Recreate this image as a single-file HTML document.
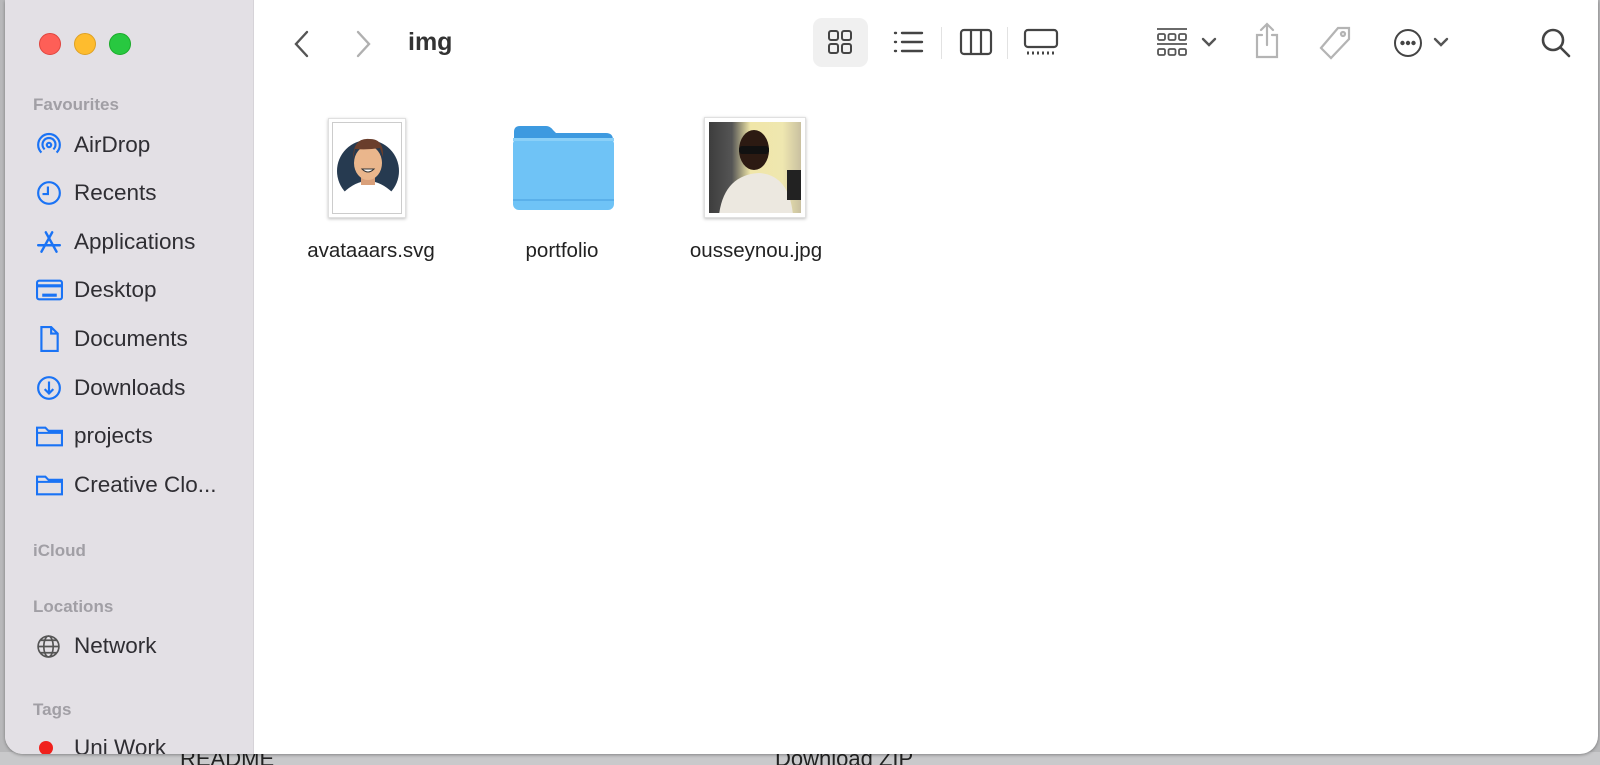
<!DOCTYPE html>
<html><head><meta charset="utf-8"><style>
*{margin:0;padding:0;box-sizing:border-box}
body{width:1600px;height:765px;overflow:hidden;background:#b8b8ba;font-family:"Liberation Sans",sans-serif;position:relative}
.bot{position:absolute;left:0;top:752px;width:1600px;height:13px;background:#c9c9cb;overflow:hidden}
.bot span{position:absolute;top:-6px;font-size:22px;color:#222}
.win{position:absolute;left:5px;top:0;width:1593px;height:754px;background:#fff;border-radius:0 0 18px 18px;overflow:hidden;box-shadow:0 1px 3px rgba(0,0,0,.35)}
.side{position:absolute;left:0;top:0;width:249px;height:100%;background:#e3e0e5;border-right:1px solid #d6d3d8}
.tl{position:absolute;top:33px;width:22px;height:22px;border-radius:50%}
.hd{position:absolute;left:28px;font-size:17px;font-weight:bold;color:#a19fa5}
.it{position:absolute;left:69px;font-size:22.5px;color:#2f2e33;line-height:24px}
.ic{position:absolute;left:31px}
.lbl{position:absolute;font-size:20.5px;color:#222;transform:translateX(-50%);white-space:nowrap}
</style></head><body>
<div class="bot"><span style="left:180px">README</span><span style="left:775px">Download ZIP</span></div>
<div class="win">
<div class="side">
<div class="tl" style="left:34px;background:#fe5f57;border:1px solid #e0443e"></div>
<div class="tl" style="left:69px;background:#febc2e;border:1px solid #dea123"></div>
<div class="tl" style="left:104px;background:#28c840;border:1px solid #1aab29"></div>
<div class="hd" style="top:95px">Favourites</div>
<svg class="ic" style="top:132px" width="26" height="26" viewBox="0 0 24 24" fill="none" stroke="#1a73f5" stroke-width="2"><circle cx="12" cy="12" r="2"/><path d="M8 16a6 6 0 1 1 8 0M5 19a10 10 0 1 1 14 0"/></svg>
<div class="it" style="top:133px">AirDrop</div>
<svg class="ic" style="top:180px" width="26" height="26" viewBox="0 0 24 24" fill="none" stroke="#1a73f5" stroke-width="2"><circle cx="12" cy="12" r="10"/><path d="M11 6v7h-5"/></svg>
<div class="it" style="top:181px">Recents</div>
<svg class="ic" style="top:229px" width="26" height="26" viewBox="0 0 24 24" fill="none" stroke="#1a73f5" stroke-width="2.2" stroke-linecap="round"><path d="M9 3l10 18M15 3L5 21M2 15h20"/></svg>
<div class="it" style="top:230px">Applications</div>
<svg class="ic" style="top:277px" width="27" height="26" viewBox="0 0 26 24" fill="none" stroke="#1a73f5" stroke-width="2"><rect x="1" y="3" width="24" height="18" rx="2"/><path d="M1 8h24M6 17h14" stroke-width="3"/></svg>
<div class="it" style="top:278px">Desktop</div>
<svg class="ic" style="top:326px" width="26" height="26" viewBox="0 0 24 24" fill="none" stroke="#1a73f5" stroke-width="2"><path d="M5 1h9l6 6v16H5zM14 1v6h6"/></svg>
<div class="it" style="top:327px">Documents</div>
<svg class="ic" style="top:375px" width="26" height="26" viewBox="0 0 24 24" fill="none" stroke="#1a73f5" stroke-width="2"><circle cx="12" cy="12" r="10"/><path d="M12 6v11M8 13l4 4 4-4"/></svg>
<div class="it" style="top:376px">Downloads</div>
<svg class="ic" style="top:423px" width="27" height="26" viewBox="0 0 26 24" fill="none" stroke="#1a73f5" stroke-width="2"><path d="M1 4h8l3 3h13v14H1zM1 9h24"/></svg>
<div class="it" style="top:424px">projects</div>
<svg class="ic" style="top:472px" width="27" height="26" viewBox="0 0 26 24" fill="none" stroke="#1a73f5" stroke-width="2"><path d="M1 4h8l3 3h13v14H1zM1 9h24"/></svg>
<div class="it" style="top:473px">Creative Clo...</div>
<div class="hd" style="top:541px">iCloud</div>
<div class="hd" style="top:597px">Locations</div>
<svg class="ic" style="top:634px" width="25" height="25" viewBox="0 0 24 24" fill="none" stroke="#555" stroke-width="1.6"><circle cx="12" cy="12" r="10"/><ellipse cx="12" cy="12" rx="4.5" ry="10"/><path d="M2 12h20M4 6h16M4 18h16"/></svg>
<div class="it" style="top:634px">Network</div>
<div class="hd" style="top:700px">Tags</div>
<div style="position:absolute;left:34px;top:741px;width:14px;height:14px;border-radius:50%;background:#f0201c"></div>
<div class="it" style="top:736px">Uni Work</div>
</div>
<svg style="position:absolute;left:287px;top:30px" width="20" height="28" viewBox="0 0 20 28" fill="none" stroke="#555" stroke-width="2.4" stroke-linecap="round"><path d="M15 2L4 14l11 12"/></svg>
<svg style="position:absolute;left:348px;top:30px" width="20" height="28" viewBox="0 0 20 28" fill="none" stroke="#b0b0b0" stroke-width="2.4" stroke-linecap="round"><path d="M5 2l11 12L5 26"/></svg>
<div style="position:absolute;left:403px;top:28px;font-size:25px;font-weight:bold;color:#333">img</div>
<div style="position:absolute;left:808px;top:18px;width:55px;height:49px;border-radius:9px;background:#f0f0f0"></div>
<svg style="position:absolute;left:822px;top:29px" width="26" height="26" viewBox="0 0 26 26" fill="none" stroke="#444" stroke-width="2"><rect x="2" y="2" width="9" height="9" rx="2"/><rect x="15" y="2" width="9" height="9" rx="2"/><rect x="2" y="15" width="9" height="9" rx="2"/><rect x="15" y="15" width="9" height="9" rx="2"/></svg>
<svg style="position:absolute;left:887px;top:30px" width="32" height="24" viewBox="0 0 32 24" fill="none" stroke="#444" stroke-width="2.4" stroke-linecap="round"><path d="M3 3h1M3 12h1M3 21h1M10 3h20M10 12h20M10 21h20"/></svg>
<div style="position:absolute;left:936px;top:27px;width:1px;height:32px;background:#e2e2e2"></div>
<svg style="position:absolute;left:954px;top:28px" width="34" height="28" viewBox="0 0 34 28" fill="none" stroke="#444" stroke-width="2.2"><rect x="2" y="2" width="30" height="24" rx="3"/><path d="M12 2v24M22 2v24"/></svg>
<div style="position:absolute;left:1002px;top:27px;width:1px;height:32px;background:#e2e2e2"></div>
<svg style="position:absolute;left:1018px;top:28px" width="36" height="28" viewBox="0 0 36 28" fill="none" stroke="#444" stroke-width="2.2"><rect x="2" y="2" width="32" height="17" rx="3"/><path d="M4 25h2M9 25h2M14 25h2M19 25h2M24 25h2M29 25h2" stroke-width="3"/></svg>
<svg style="position:absolute;left:1150px;top:27px" width="34" height="32" viewBox="0 0 34 32" fill="none" stroke="#555" stroke-width="1.8"><path d="M2 2h30M2 17h30"/><rect x="3" y="7" width="7" height="6" rx="1.5"/><rect x="13.5" y="7" width="7" height="6" rx="1.5"/><rect x="24" y="7" width="7" height="6" rx="1.5"/><rect x="3" y="22" width="7" height="6" rx="1.5"/><rect x="13.5" y="22" width="7" height="6" rx="1.5"/><rect x="24" y="22" width="7" height="6" rx="1.5"/></svg>
<svg style="position:absolute;left:1196px;top:36px" width="16" height="12" viewBox="0 0 16 12" fill="none" stroke="#555" stroke-width="2.4" stroke-linecap="round"><path d="M2 3l6 6 6-6"/></svg>
<svg style="position:absolute;left:1248px;top:22px" width="28" height="38" viewBox="0 0 28 38" fill="none" stroke="#b4b4b4" stroke-width="2.2" stroke-linecap="round"><path d="M9 13H4v22h20V13h-5M14 2v21M8 8l6-6 6 6"/></svg>
<svg style="position:absolute;left:1313px;top:25px" width="36" height="36" viewBox="0 0 36 36" fill="none" stroke="#b4b4b4" stroke-width="2.2"><path d="M20 3h11v11L13 33 3 23z"/><circle cx="25" cy="9" r="2"/></svg>
<svg style="position:absolute;left:1388px;top:28px" width="30" height="30" viewBox="0 0 30 30" fill="none" stroke="#444" stroke-width="2"><circle cx="15" cy="15" r="13"/><circle cx="9.5" cy="15" r="1.2" fill="#444"/><circle cx="15" cy="15" r="1.2" fill="#444"/><circle cx="20.5" cy="15" r="1.2" fill="#444"/></svg>
<svg style="position:absolute;left:1428px;top:36px" width="16" height="12" viewBox="0 0 16 12" fill="none" stroke="#555" stroke-width="2.4" stroke-linecap="round"><path d="M2 3l6 6 6-6"/></svg>
<svg style="position:absolute;left:1535px;top:27px" width="32" height="32" viewBox="0 0 32 32" fill="none" stroke="#444" stroke-width="2.6" stroke-linecap="round"><circle cx="13" cy="13" r="10"/><path d="M20.5 20.5L29 29"/></svg>
<div style="position:absolute;left:323px;top:118px;width:78px;height:100px;background:#fff;border:1px solid #e0e0e0;box-shadow:0 1px 3px rgba(0,0,0,.25)">
<div style="position:absolute;left:3px;top:3px;right:3px;bottom:3px;border:1px solid #ccc;overflow:hidden">
<svg width="70" height="92" viewBox="0 0 70 92"><circle cx="35" cy="48" r="31" fill="#263a50"/><path d="M10 70q25-24 50 0a31 31 0 0 1-50 0z" fill="#fff"/><rect x="28" y="50" width="14" height="12" fill="#d9a07a"/><ellipse cx="35" cy="40" rx="14" ry="17" fill="#eab68c"/><path d="M20 36q0-22 17-20q14 0 13 18l-3-9q-12 2-25 1z" fill="#6a3e2c"/><path d="M29 46q6 6 12 0z" fill="#fff" stroke="#333"/></svg></div></div>
<div class="lbl" style="left:366px;top:239px">avataaars.svg</div>
<svg style="position:absolute;left:507px;top:124px" width="103" height="88" viewBox="0 0 103 88"><path d="M2 8q0-6 6-6h26q4 0 7 4l3 3h50q7 0 7 7v10H2z" fill="#3d9ae0"/><rect x="1" y="14" width="101" height="72" rx="6" fill="#6fc3f6"/><path d="M1 76h101" stroke="#5ab0ea" stroke-width="2"/><rect x="1" y="14" width="101" height="3" fill="#8ad0f8"/></svg>
<div class="lbl" style="left:557px;top:239px">portfolio</div>
<div style="position:absolute;left:699px;top:117px;width:102px;height:101px;background:#fff;border:1px solid #e0e0e0;box-shadow:0 1px 3px rgba(0,0,0,.25)">
<div style="position:absolute;left:4px;top:4px;right:4px;bottom:4px;overflow:hidden;background:linear-gradient(90deg,#3d3d3d 0%,#555 25%,#f0e6a8 45%,#efe7b0 80%,#c9c0a0 100%)">
<svg width="94" height="93" viewBox="0 0 94 93"><path d="M10 93q5-40 40-42q30 2 34 42z" fill="#ece8e0"/><ellipse cx="45" cy="28" rx="15" ry="20" fill="#2c1a12"/><rect x="30" y="24" width="30" height="8" fill="#111" rx="3"/><rect x="78" y="48" width="16" height="30" fill="#222"/></svg></div></div>
<div class="lbl" style="left:751px;top:239px">ousseynou.jpg</div>
</div>
</body></html>
